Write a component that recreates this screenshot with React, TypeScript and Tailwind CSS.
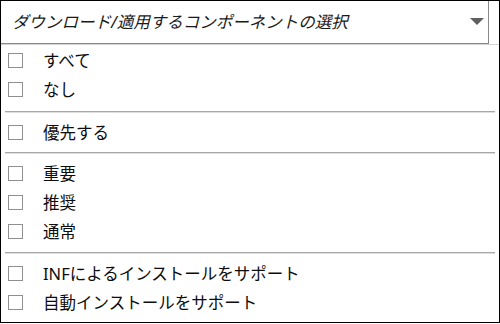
import React from "react";

const Row = ({ label }: { label: string }) => (
  <div className="flex h-[29px] items-center">
    <div className="ml-[7px] h-[15px] w-[15px] shrink-0 border border-[#8f8f8f] bg-white" />
    <span className="ml-[20px] whitespace-nowrap text-[16.5px] leading-[20px] text-[#0d0d0d]">{label}</span>
  </div>
);

const Sep = ({ mt }: { mt: string }) => (
  <div className={`mx-[4px] ${mt} mb-[5px]`}>
    <div className="h-px bg-[#a8a8a8]" />
    <div className="h-px bg-[#dedede]" />
  </div>
);

export default function App() {
  return (
    <div className="h-[324px] w-[500px] bg-white">
      <div className="flex h-[323px] w-[500px] flex-col border border-black font-['Noto_Sans','Noto_Sans_CJK_JP',sans-serif]">
        <div className="flex h-[43px] w-[488px] shrink-0 items-center border-r border-b border-[#8a8a8a] bg-white">
          <span className="ml-[11px] whitespace-nowrap text-[16.5px] italic leading-[20px] text-[#1a1a1a]">
            ダウンロード/適用するコンポーネントの選択
          </span>
          <svg className="ml-auto mr-[4px]" width="14" height="8" viewBox="0 0 14 8">
            <polygon points="0,0 14,0 7,7" fill="#5f5f5f" />
          </svg>
        </div>
        <div className="flex flex-1 flex-col border-t border-[#d4d4d4]">
          <div className="h-[1px]" />
          <Row label="すべて" />
          <Row label="なし" />
          <Sep mt="mt-[7px]" />
          <Row label="優先する" />
          <Sep mt="mt-[5px]" />
          <Row label="重要" />
          <Row label="推奨" />
          <Row label="通常" />
          <Sep mt="mt-[6px]" />
          <Row label="INFによるインストールをサポート" />
          <Row label="自動インストールをサポート" />
        </div>
      </div>
    </div>
  );
}
